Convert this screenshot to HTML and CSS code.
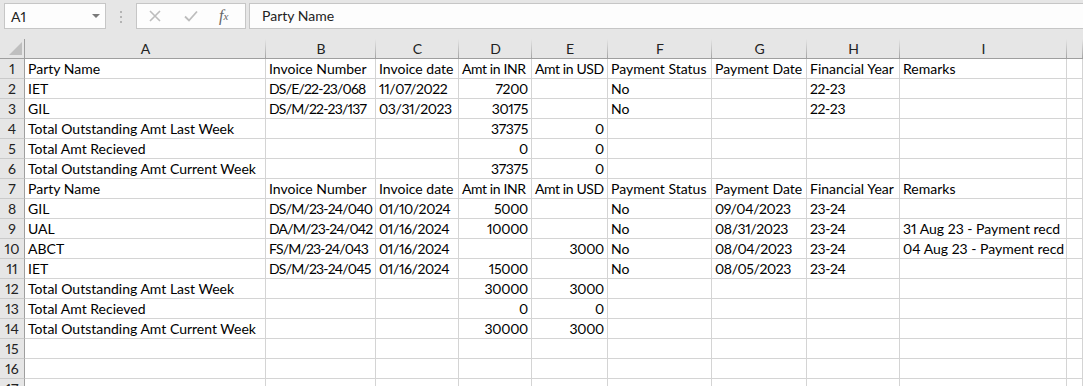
FILE: index.html
```html
<!DOCTYPE html>
<html>
<head>
<meta charset="UTF-8">
<title>Outstanding</title>
<link rel="stylesheet" href="styles.css">
</head>
<body>
<div class="toolbar">
	<div class="namebox"><span>A1</span><span class="drop"></span></div>
	<svg class="dots" width="3" height="13" viewBox="0 0 3 13"><rect x="0" y="0" width="2" height="2" fill="#b4b4b4"/><rect x="0" y="5" width="2" height="2" fill="#b4b4b4"/><rect x="0" y="10" width="2" height="2" fill="#b4b4b4"/></svg>
	<div class="fxbox">
		<svg width="12" height="12" viewBox="0 0 12 12"><path d="M1 1L11 11M11 1L1 11" stroke="#bdbdbd" stroke-width="1.6" fill="none"/></svg>
		<svg width="14" height="12" viewBox="0 0 14 12"><path d="M1 6.5L5 10.5L13 1.5" stroke="#bdbdbd" stroke-width="1.8" fill="none"/></svg>
		<span class="fx">f<sub>x</sub></span>
	</div>
	<div class="formula">Party Name</div>
</div>
<div class="sheet">
	<div class="row head">
		<div class="corner"><svg width="24" height="19" viewBox="0 0 24 19"><polygon points="22,3 22,16 9,16" fill="#bfbfbf"/></svg></div>
		<div class="ch">A</div><div class="ch">B</div><div class="ch">C</div><div class="ch">D</div><div class="ch">E</div><div class="ch">F</div><div class="ch">G</div><div class="ch">H</div><div class="ch">I</div><div class="ch"></div>
	</div>
	<div class="row">
		<div class="rh">1</div>
		<div class="c">Party Name</div><div class="c">Invoice Number</div><div class="c">Invoice date</div><div class="c d">Amt in INR</div><div class="c d">Amt in USD</div><div class="c">Payment Status</div><div class="c">Payment Date</div><div class="c">Financial Year</div><div class="c">Remarks</div><div class="c"></div>
	</div>
	<div class="row">
		<div class="rh">2</div>
		<div class="c">IET</div><div class="c k">DS/E/22-23/068</div><div class="c d">11/07/2022</div><div class="c n">7200</div><div class="c"></div><div class="c">No</div><div class="c"></div><div class="c d">22-23</div><div class="c"></div><div class="c"></div>
	</div>
	<div class="row">
		<div class="rh">3</div>
		<div class="c">GIL</div><div class="c k">DS/M/22-23/137</div><div class="c d">03/31/2023</div><div class="c n">30175</div><div class="c"></div><div class="c">No</div><div class="c"></div><div class="c d">22-23</div><div class="c"></div><div class="c"></div>
	</div>
	<div class="row">
		<div class="rh">4</div>
		<div class="c">Total Outstanding Amt Last Week</div><div class="c"></div><div class="c"></div><div class="c n">37375</div><div class="c n">0</div><div class="c"></div><div class="c"></div><div class="c"></div><div class="c"></div><div class="c"></div>
	</div>
	<div class="row">
		<div class="rh">5</div>
		<div class="c">Total Amt Recieved</div><div class="c"></div><div class="c"></div><div class="c n">0</div><div class="c n">0</div><div class="c"></div><div class="c"></div><div class="c"></div><div class="c"></div><div class="c"></div>
	</div>
	<div class="row">
		<div class="rh">6</div>
		<div class="c">Total Outstanding Amt Current Week</div><div class="c"></div><div class="c"></div><div class="c n">37375</div><div class="c n">0</div><div class="c"></div><div class="c"></div><div class="c"></div><div class="c"></div><div class="c"></div>
	</div>
	<div class="row">
		<div class="rh">7</div>
		<div class="c">Party Name</div><div class="c">Invoice Number</div><div class="c">Invoice date</div><div class="c d">Amt in INR</div><div class="c d">Amt in USD</div><div class="c">Payment Status</div><div class="c">Payment Date</div><div class="c">Financial Year</div><div class="c">Remarks</div><div class="c"></div>
	</div>
	<div class="row">
		<div class="rh">8</div>
		<div class="c">GIL</div><div class="c k">DS/M/23-24/040</div><div class="c d">01/10/2024</div><div class="c n">5000</div><div class="c"></div><div class="c">No</div><div class="c d">09/04/2023</div><div class="c d">23-24</div><div class="c"></div><div class="c"></div>
	</div>
	<div class="row">
		<div class="rh">9</div>
		<div class="c">UAL</div><div class="c k">DA/M/23-24/042</div><div class="c d">01/16/2024</div><div class="c n">10000</div><div class="c"></div><div class="c">No</div><div class="c d">08/31/2023</div><div class="c d">23-24</div><div class="c">31 Aug 23 - Payment recd</div><div class="c"></div>
	</div>
	<div class="row">
		<div class="rh">10</div>
		<div class="c">ABCT</div><div class="c k">FS/M/23-24/043</div><div class="c d">01/16/2024</div><div class="c"></div><div class="c n">3000</div><div class="c">No</div><div class="c d">08/04/2023</div><div class="c d">23-24</div><div class="c">04 Aug 23 - Payment recd</div><div class="c"></div>
	</div>
	<div class="row">
		<div class="rh">11</div>
		<div class="c">IET</div><div class="c k">DS/M/23-24/045</div><div class="c d">01/16/2024</div><div class="c n">15000</div><div class="c"></div><div class="c">No</div><div class="c d">08/05/2023</div><div class="c d">23-24</div><div class="c"></div><div class="c"></div>
	</div>
	<div class="row">
		<div class="rh">12</div>
		<div class="c">Total Outstanding Amt Last Week</div><div class="c"></div><div class="c"></div><div class="c n">30000</div><div class="c n">3000</div><div class="c"></div><div class="c"></div><div class="c"></div><div class="c"></div><div class="c"></div>
	</div>
	<div class="row">
		<div class="rh">13</div>
		<div class="c">Total Amt Recieved</div><div class="c"></div><div class="c"></div><div class="c n">0</div><div class="c n">0</div><div class="c"></div><div class="c"></div><div class="c"></div><div class="c"></div><div class="c"></div>
	</div>
	<div class="row">
		<div class="rh">14</div>
		<div class="c">Total Outstanding Amt Current Week</div><div class="c"></div><div class="c"></div><div class="c n">30000</div><div class="c n">3000</div><div class="c"></div><div class="c"></div><div class="c"></div><div class="c"></div><div class="c"></div>
	</div>
	<div class="row">
		<div class="rh">15</div>
		<div class="c"></div><div class="c"></div><div class="c"></div><div class="c"></div><div class="c"></div><div class="c"></div><div class="c"></div><div class="c"></div><div class="c"></div><div class="c"></div>
	</div>
	<div class="row">
		<div class="rh">16</div>
		<div class="c"></div><div class="c"></div><div class="c"></div><div class="c"></div><div class="c"></div><div class="c"></div><div class="c"></div><div class="c"></div><div class="c"></div><div class="c"></div>
	</div>
	<div class="row">
		<div class="rh">17</div>
		<div class="c"></div><div class="c"></div><div class="c"></div><div class="c"></div><div class="c"></div><div class="c"></div><div class="c"></div><div class="c"></div><div class="c"></div><div class="c"></div>
	</div>
</div>
</body>
</html>
```

FILE: styles.css
```css
body{
	margin:0;
	background:#fff;
	color:#000;
	font-family:Lato, "Liberation Sans", sans-serif;
	font-size:14px;
	font-variant-numeric:proportional-nums;
	overflow:hidden;
}
.toolbar{
	height:39px;
	box-sizing:border-box;
	padding:3px 0 0 4px;
	background:#e6e6e6;
	display:flex;
	align-items:flex-start;
}
.namebox{
	width:102px;
	height:26px;
	box-sizing:border-box;
	border:1px solid #c6c6c6;
	background:#fdfdfd;
	display:flex;
	align-items:center;
	justify-content:space-between;
	padding:0 5px 0 6px;
	color:#222;
}
.drop{
	width:0;
	height:0;
	border-left:4px solid transparent;
	border-right:4px solid transparent;
	border-top:4px solid #7a7a7a;
}
.dots{
	margin:8px 0 0 14px;
}
.fxbox{
	width:110px;
	height:26px;
	box-sizing:border-box;
	margin-left:13px;
	border:1px solid #c6c6c6;
	background:#fdfdfd;
	display:flex;
	align-items:center;
	padding:0 0 0 12px;
	gap:23px;
}
.fx{
	font-family:"Liberation Serif", serif;
	font-style:italic;
	font-size:16px;
	color:#666;
	margin-left:-2px;
}
.fx sub{
	font-size:11px;
	vertical-align:1px;
}
.formula{
	flex:1;
	height:26px;
	box-sizing:border-box;
	margin-left:3px;
	border:1px solid #c6c6c6;
	border-right:0;
	background:#fdfdfd;
	padding-left:12px;
	line-height:24px;
	color:#222;
}
.row{
	display:grid;
	grid-template-columns:25px 241px 110px 83px 73px 76px 104px 95px 93px 167px 1fr;
	height:20px;
}
.row > div{
	box-sizing:border-box;
	height:20px;
	line-height:19px;
	white-space:nowrap;
	overflow:hidden;
}
.head{
	background:#e6e6e6;
}
.corner{
	border-right:1px solid #9f9f9f;
	border-bottom:1px solid #9f9f9f;
}
.corner svg{
	display:block;
}
.ch{
	text-align:center;
	color:#222;
	border-bottom:1px solid #9f9f9f;
	background:linear-gradient(#e6e6e6, #a5a5a5) right top / 1px 100% no-repeat;
}
.rh{
	background:#e6e6e6;
	text-align:center;
	color:#222;
	border-right:1px solid #9f9f9f;
	border-bottom:1px solid #cacaca;
}
.c{
	border-right:1px solid #d4d4d4;
	border-bottom:1px solid #d4d4d4;
	padding:0 3px;
}
.d{
	letter-spacing:-0.4px;
}
.k{
	letter-spacing:-0.8px;
}
.n{
	text-align:right;
	letter-spacing:-0.3px;
}
```
